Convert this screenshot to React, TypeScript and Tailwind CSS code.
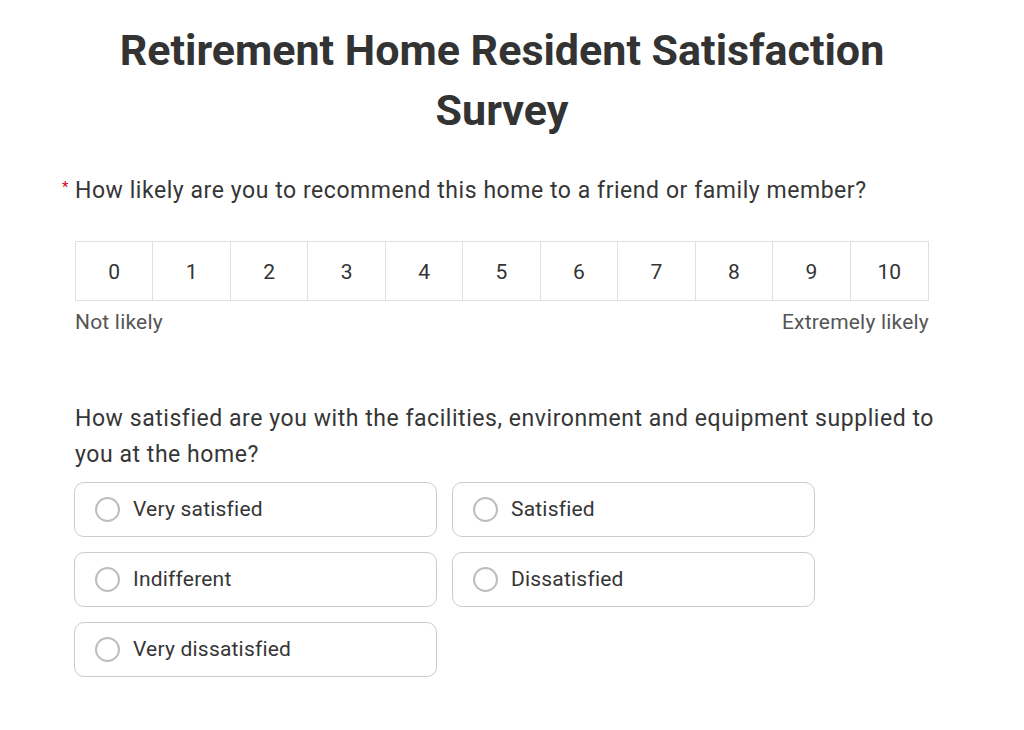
import React from "react";

const options = [
  "Very satisfied",
  "Satisfied",
  "Indifferent",
  "Dissatisfied",
  "Very dissatisfied",
];

export default function App() {
  return (
    <div
      className="min-h-[730px] w-[1024px] bg-white text-[#333333]"
      style={{ fontFamily: "Roboto, 'Noto Sans', Arial, sans-serif" }}
    >
      <div className="ml-[75px] w-[854px] pt-[20px]">
        <h1 className="text-center text-[43px] font-bold leading-[60px] text-[#333333]">
          Retirement Home Resident Satisfaction
          <br />
          Survey
        </h1>

        <div className="relative mt-[33px] text-[23px] leading-[36px] tracking-[0.55px] text-[#363636]">
          <span className="absolute left-[-13px] top-[-4px] text-[15px] text-[#d0021b]">*</span>
          How likely are you to recommend this home to a friend or family member?
        </div>

        <div className="mt-[32px] grid h-[60px] grid-cols-11 border border-[#e0e0e0]">
          {Array.from({ length: 11 }, (_, i) => (
            <div
              key={i}
              className={
                "flex items-center justify-center pt-[3px] text-[21px] text-[#333333] " +
                (i < 10 ? "border-r border-[#e0e0e0]" : "")
              }
            >
              {i}
            </div>
          ))}
        </div>
        <div className="mt-[9px] flex justify-between text-[21px] leading-[24px] tracking-[0.2px] text-[#555555]">
          <span>Not likely</span>
          <span>Extremely likely</span>
        </div>

        <div className="mt-[67px] w-[862px] text-[23px] leading-[36px] tracking-[0.55px] text-[#363636]">
          How satisfied are you with the facilities, environment and equipment supplied to you at the home?
        </div>

        <div className="ml-[-1px] mt-[9px] grid w-[741px] grid-cols-2 gap-x-[15px] gap-y-[15px]">
          {options.map((o) => (
            <div
              key={o}
              className="flex h-[55px] items-center rounded-[10px] border border-[#cccccc] pl-[20px]"
            >
              <span className="h-[25px] w-[25px] shrink-0 rounded-full border-2 border-[#bdbdbd]" />
              <span className="ml-[13px] text-[21px] tracking-[0.2px] text-[#363636]">{o}</span>
            </div>
          ))}
        </div>
      </div>
    </div>
  );
}
